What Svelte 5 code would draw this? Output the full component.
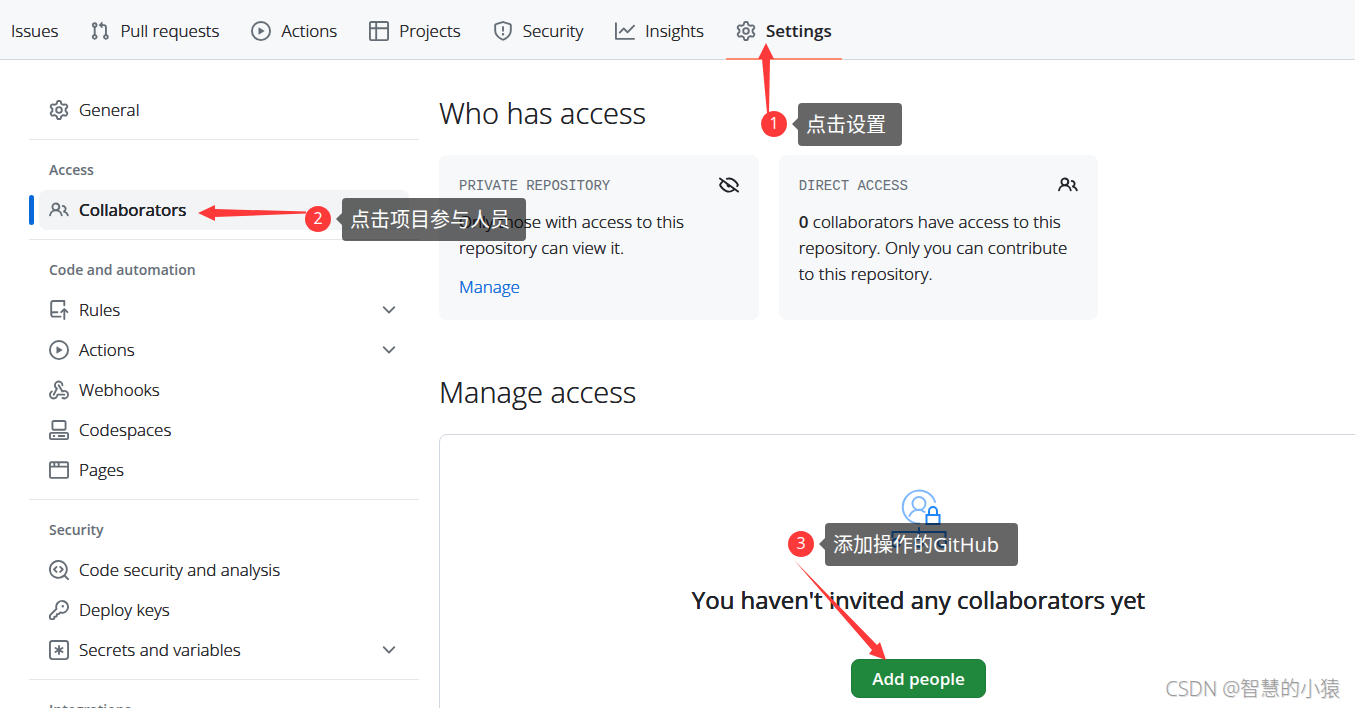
<script>
  const icons = {
    pull: 'M1.5 3.25a2.25 2.25 0 1 1 3 2.122v5.256a2.251 2.251 0 1 1-1.5 0V5.372A2.25 2.25 0 0 1 1.5 3.25Zm5.677-.177L9.573.677A.25.25 0 0 1 10 .854V2.5h1A2.5 2.5 0 0 1 13.5 5v5.628a2.251 2.251 0 1 1-1.5 0V5a1 1 0 0 0-1-1h-1v1.646a.25.25 0 0 1-.427.177L7.177 3.427a.25.25 0 0 1 0-.354ZM3.75 2.5a.75.75 0 1 0 0 1.5.75.75 0 0 0 0-1.5Zm0 9.5a.75.75 0 1 0 0 1.5.75.75 0 0 0 0-1.5Zm8.25.75a.75.75 0 1 0 1.5 0 .75.75 0 0 0-1.5 0Z',
    play: 'M8 0a8 8 0 1 1 0 16A8 8 0 0 1 8 0ZM1.5 8a6.5 6.5 0 1 0 13 0 6.5 6.5 0 0 0-13 0Zm4.879-2.773 4.264 2.559a.25.25 0 0 1 0 .428l-4.264 2.559A.25.25 0 0 1 6 10.559V5.442a.25.25 0 0 1 .379-.215Z',
    table: 'M0 1.75C0 .784.784 0 1.75 0h12.5C15.216 0 16 .784 16 1.75v12.5A1.75 1.75 0 0 1 14.25 16H1.75A1.75 1.75 0 0 1 0 14.25ZM6.5 6.5v8h7.75a.25.25 0 0 0 .25-.25V6.5Zm8-1.5V1.75a.25.25 0 0 0-.25-.25H6.5V5Zm-13 1.5v7.75c0 .138.112.25.25.25H5v-8ZM5 5V1.5H1.75a.25.25 0 0 0-.25.25V5Z',
    shield: 'M7.467.133a1.748 1.748 0 0 1 1.066 0l5.25 1.68A1.75 1.75 0 0 1 15 3.48V7c0 1.566-.32 3.182-1.303 4.682-.983 1.498-2.585 2.813-5.032 3.855a1.697 1.697 0 0 1-1.33 0c-2.447-1.042-4.049-2.357-5.032-3.855C1.32 10.182 1 8.566 1 7V3.48a1.75 1.75 0 0 1 1.217-1.667Zm.61 1.429a.25.25 0 0 0-.153 0l-5.25 1.68a.25.25 0 0 0-.174.238V7c0 1.358.275 2.666 1.057 3.86.784 1.194 2.121 2.34 4.366 3.297a.196.196 0 0 0 .154 0c2.245-.956 3.582-2.104 4.366-3.298C13.225 9.666 13.5 8.36 13.5 7V3.48a.251.251 0 0 0-.174-.237l-5.25-1.68ZM8.75 4.75v3a.75.75 0 0 1-1.5 0v-3a.75.75 0 0 1 1.5 0ZM9 10.5a1 1 0 1 1-2 0 1 1 0 0 1 2 0Z',
    graph: 'M1.5 1.75V13.5h13.75a.75.75 0 0 1 0 1.5H.75a.75.75 0 0 1-.75-.75V1.75a.75.75 0 0 1 1.5 0Zm14.28 2.53-5.25 5.25a.75.75 0 0 1-1.06 0L7 7.06 4.28 9.78a.751.751 0 0 1-1.042-.018.751.751 0 0 1-.018-1.042l3.25-3.25a.75.75 0 0 1 1.06 0L10 7.94l4.72-4.72a.751.751 0 0 1 1.042.018.751.751 0 0 1 .018 1.042Z',
    gear: 'M8 0a8.2 8.2 0 0 1 .701.031C9.444.095 9.99.645 10.16 1.29l.288 1.107c.018.066.079.158.212.224.231.114.454.243.668.386.123.082.233.09.299.071l1.103-.303c.644-.176 1.392.021 1.82.63.27.385.506.792.704 1.218.315.675.111 1.422-.364 1.891l-.814.806c-.049.048-.098.147-.088.294.016.257.016.515 0 .772-.01.147.038.246.088.294l.814.806c.475.469.679 1.216.364 1.891a7.977 7.977 0 0 1-.704 1.217c-.428.61-1.176.807-1.82.63l-1.102-.302c-.067-.019-.177-.011-.3.071a5.909 5.909 0 0 1-.668.386c-.133.066-.194.158-.211.224l-.29 1.106c-.168.646-.715 1.196-1.458 1.26a8.006 8.006 0 0 1-1.402 0c-.743-.064-1.289-.614-1.458-1.26l-.289-1.106c-.018-.066-.079-.158-.212-.224a5.738 5.738 0 0 1-.668-.386c-.123-.082-.233-.09-.299-.071l-1.103.303c-.644.176-1.392-.021-1.82-.63a8.12 8.12 0 0 1-.704-1.218c-.315-.675-.111-1.422.363-1.891l.815-.806c.05-.048.098-.147.088-.294a6.214 6.214 0 0 1 0-.772c.01-.147-.038-.246-.088-.294l-.815-.806C.635 6.045.431 5.298.746 4.623a7.92 7.92 0 0 1 .704-1.217c.428-.61 1.176-.807 1.82-.63l1.102.302c.067.019.177.011.3-.071.214-.143.437-.272.668-.386.133-.066.194-.158.211-.224l.29-1.106C6.009.645 6.556.095 7.299.03 7.53.01 7.764 0 8 0Zm-.571 1.525c-.036.003-.108.036-.137.146l-.289 1.105c-.147.561-.549.967-.998 1.189-.173.086-.34.183-.5.29-.417.278-.97.423-1.529.27l-1.103-.303c-.109-.03-.175.016-.195.045-.22.312-.412.644-.573.99-.014.031-.021.11.059.19l.815.806c.411.406.562.957.53 1.456a4.709 4.709 0 0 0 0 .582c.032.499-.119 1.05-.53 1.456l-.815.806c-.081.08-.073.159-.059.19.162.346.353.677.573.989.02.03.085.076.195.046l1.102-.303c.56-.153 1.113-.008 1.53.27.161.107.328.204.501.29.447.222.85.629.997 1.189l.289 1.105c.029.109.101.143.137.146a6.6 6.6 0 0 0 1.142 0c.036-.003.108-.036.137-.146l.289-1.105c.147-.561.549-.967.998-1.189.173-.086.34-.183.5-.29.417-.278.97-.423 1.529-.27l1.103.303c.109.029.175-.016.195-.045.22-.313.411-.644.573-.99.014-.031.021-.11-.059-.19l-.815-.806c-.411-.406-.562-.957-.53-1.456a4.709 4.709 0 0 0 0-.582c-.032-.499.119-1.05.53-1.456l.815-.806c.081-.08.073-.159.059-.19a6.464 6.464 0 0 0-.573-.989c-.02-.03-.085-.076-.195-.046l-1.102.303c-.56.153-1.113.008-1.53-.27a4.44 4.44 0 0 0-.501-.29c-.447-.222-.85-.629-.997-1.189l-.289-1.105c-.029-.11-.101-.143-.137-.146a6.6 6.6 0 0 0-1.142 0ZM11 8a3 3 0 1 1-6 0 3 3 0 0 1 6 0ZM9.5 8a1.5 1.5 0 1 0-3.001.001A1.5 1.5 0 0 0 9.5 8Z',
    people: 'M2 5.5a3.5 3.5 0 1 1 5.898 2.549 5.508 5.508 0 0 1 3.034 4.084.75.75 0 1 1-1.482.235 4 4 0 0 0-7.9 0 .75.75 0 0 1-1.482-.236A5.507 5.507 0 0 1 3.102 8.05 3.493 3.493 0 0 1 2 5.5ZM11 4a3.001 3.001 0 0 1 2.22 5.018 5.01 5.01 0 0 1 2.56 3.012.749.749 0 0 1-.885.954.752.752 0 0 1-.549-.514 3.507 3.507 0 0 0-2.522-2.372.75.75 0 0 1-.574-.73v-.352a.75.75 0 0 1 .416-.672A1.5 1.5 0 0 0 11 5.5.75.75 0 0 1 11 4Zm-5.5-.5a2 2 0 1 0-.001 3.999A2 2 0 0 0 5.5 3.5Z',
    push: 'M1 2.5A2.5 2.5 0 0 1 3.5 0h8.75a.75.75 0 0 1 .75.75v3.5a.75.75 0 0 1-1.5 0V1.5h-8a1 1 0 0 0-1 1v6.708A2.493 2.493 0 0 1 3.5 9h3.25a.75.75 0 0 1 0 1.5H3.5a1 1 0 0 0 0 2h5.75a.75.75 0 0 1 0 1.5H3.5A2.5 2.5 0 0 1 1 11.5Zm13.23 7.79h-.001l-1.224-1.224v6.184a.75.75 0 0 1-1.5 0V9.066L10.28 10.29a.75.75 0 0 1-1.06-1.061l2.505-2.504a.75.75 0 0 1 1.06 0L15.29 9.23a.751.751 0 0 1-.018 1.042.751.751 0 0 1-1.042.018Z',
    webhook: 'M5.5 4.25a2.25 2.25 0 0 1 4.5 0 .75.75 0 0 0 1.5 0 3.75 3.75 0 1 0-6.14 2.889l-2.272 4.258a.75.75 0 0 0 1.324.706L7 7.25a.75.75 0 0 0-.309-1.015A2.25 2.25 0 0 1 5.5 4.25ZM7.364 3.607a.75.75 0 0 1 1.03.257l2.608 4.349a3.75 3.75 0 1 1-.628 6.785.75.75 0 0 1 .752-1.299 2.25 2.25 0 1 0-.033-3.88.75.75 0 0 1-1.03-.256L7.107 4.636a.75.75 0 0 1 .257-1.03ZM2.9 8.776A.75.75 0 0 1 2.625 9.8 2.25 2.25 0 1 0 6 11.75a.75.75 0 0 1 .75-.751h5.5a.75.75 0 0 1 0 1.5H7.425a3.75 3.75 0 1 1-5.55-3.998.75.75 0 0 1 1.024.274Z',
    codespaces: 'M0 11.25c0-.966.784-1.75 1.75-1.75h12.5c.966 0 1.75.784 1.75 1.75v3A1.75 1.75 0 0 1 14.25 16H1.75A1.75 1.75 0 0 1 0 14.25Zm2-9.5C2 .784 2.784 0 3.75 0h8.5C13.216 0 14 .784 14 1.75v5a1.75 1.75 0 0 1-1.75 1.75h-8.5A1.75 1.75 0 0 1 2 6.75Zm1.75-.25a.25.25 0 0 0-.25.25v5c0 .138.112.25.25.25h8.5a.25.25 0 0 0 .25-.25v-5a.25.25 0 0 0-.25-.25Zm-2 9.5a.25.25 0 0 0-.25.25v3c0 .138.112.25.25.25h12.5a.25.25 0 0 0 .25-.25v-3a.25.25 0 0 0-.25-.25ZM7 12.75a.75.75 0 0 1 .75-.75h4.5a.75.75 0 0 1 0 1.5h-4.5a.75.75 0 0 1-.75-.75Zm-4 0a.75.75 0 0 1 .75-.75h.5a.75.75 0 0 1 0 1.5h-.5a.75.75 0 0 1-.75-.75Z',
    browser: 'M0 2.75C0 1.784.784 1 1.75 1h12.5c.966 0 1.75.784 1.75 1.75v10.5A1.75 1.75 0 0 1 14.25 15H1.75A1.75 1.75 0 0 1 0 13.25ZM14.5 6h-13v7.25c0 .138.112.25.25.25h12.5a.25.25 0 0 0 .25-.25Zm-6-3.5v2h6V2.75a.25.25 0 0 0-.25-.25ZM5 2.5v2h2v-2Zm-3.25 0a.25.25 0 0 0-.25.25V4.5h2v-2Z',
    codescan: 'M8.47 4.97a.75.75 0 0 0 0 1.06L9.94 7.5 8.47 8.97a.75.75 0 1 0 1.06 1.06l2-2a.75.75 0 0 0 0-1.06l-2-2a.75.75 0 0 0-1.06 0ZM6.53 6.03a.75.75 0 0 0-1.06-1.06l-2 2a.75.75 0 0 0 0 1.06l2 2a.75.75 0 1 0 1.06-1.06L5.06 7.5l1.47-1.47ZM12.246 13.307a7.501 7.501 0 1 1 1.06-1.06l2.474 2.473a.75.75 0 1 1-1.06 1.06l-2.474-2.473ZM1.5 7.5a6.002 6.002 0 0 0 3.608 5.504 6.002 6.002 0 0 0 6.486-1.117.748.748 0 0 1 .292-.293A6 6 0 1 0 1.5 7.5Z',
    key: 'M10.5 0a5.499 5.499 0 1 1-1.288 10.848l-.932.932a.749.749 0 0 1-.53.22H7v.75a.749.749 0 0 1-.22.53l-.5.5a.749.749 0 0 1-.53.22H5v.75a.749.749 0 0 1-.22.53l-.5.5a.749.749 0 0 1-.53.22h-2A1.75 1.75 0 0 1 0 14.25v-2c0-.199.079-.389.22-.53l4.932-4.932A5.5 5.5 0 0 1 10.5 0Zm-4 5.5c-.001.431.069.86.205 1.269a.75.75 0 0 1-.181.768L1.5 12.56v1.69c0 .138.112.25.25.25h1.69l.06-.06v-1.19a.75.75 0 0 1 .75-.75h1.19l.06-.06v-1.19a.75.75 0 0 1 .75-.75h1.19l1.023-1.025a.75.75 0 0 1 .768-.18A4 4 0 1 0 6.5 5.5ZM11 6a1 1 0 1 1 0-2 1 1 0 0 1 0 2Z',
    asterisk: 'M0 2.75A2.75 2.75 0 0 1 2.75 0h10.5A2.75 2.75 0 0 1 16 2.75v10.5A2.75 2.75 0 0 1 13.25 16H2.75A2.75 2.75 0 0 1 0 13.25ZM2.75 1.5c-.69 0-1.25.56-1.25 1.25v10.5c0 .69.56 1.25 1.25 1.25h10.5c.69 0 1.25-.56 1.25-1.25V2.75c0-.69-.56-1.25-1.25-1.25ZM8 4a.75.75 0 0 1 .75.75V6.7l1.69-.975a.75.75 0 0 1 .75 1.3L9.5 8l1.69.976a.75.75 0 0 1-.75 1.298L8.75 9.3v1.951a.75.75 0 0 1-1.5 0V9.299l-1.69.976a.75.75 0 0 1-.75-1.3L6.5 8l-1.69-.975a.75.75 0 0 1 .75-1.3l1.69.976V4.75A.75.75 0 0 1 8 4Z',
    chevron: 'M12.78 5.22a.749.749 0 0 1 0 1.06l-4.25 4.25a.749.749 0 0 1-1.06 0L3.22 6.28a.749.749 0 1 1 1.06-1.06L8 8.939l3.72-3.719a.749.749 0 0 1 1.06 0Z',
    eye: 'M.143 2.31a.75.75 0 0 1 1.047-.167l14.5 10.5a.75.75 0 1 1-.88 1.214l-2.248-1.628C11.346 13.19 9.792 14 8 14c-1.981 0-3.67-.992-4.933-2.078C1.797 10.832.88 9.577.43 8.9a1.619 1.619 0 0 1 0-1.797c.353-.533.995-1.42 1.868-2.305L.31 3.357A.75.75 0 0 1 .143 2.31Zm1.536 5.622A.12.12 0 0 0 1.657 8c0 .021.006.045.022.068.412.621 1.242 1.75 2.366 2.717C5.175 11.758 6.527 12.5 8 12.5c1.195 0 2.31-.488 3.29-1.191L9.063 9.695A2 2 0 0 1 6.058 7.52L3.529 5.688a14.207 14.207 0 0 0-1.85 2.244ZM8 3.5c-.516 0-1.017.09-1.499.251a.75.75 0 1 1-.473-1.423A6.207 6.207 0 0 1 8 2c1.981 0 3.67.992 4.933 2.078 1.27 1.091 2.187 2.345 2.637 3.023a1.62 1.62 0 0 1 0 1.798c-.11.166-.248.365-.41.587a.75.75 0 1 1-1.21-.887c.148-.201.272-.382.371-.53a.119.119 0 0 0 0-.137c-.412-.621-1.242-1.75-2.366-2.717C10.825 4.242 9.473 3.5 8 3.5Z'
  };

  const tabs = [
    { label: 'Issues' },
    { label: 'Pull requests', icon: 'pull' },
    { label: 'Actions', icon: 'play' },
    { label: 'Projects', icon: 'table' },
    { label: 'Security', icon: 'shield' },
    { label: 'Insights', icon: 'graph' },
    { label: 'Settings', icon: 'gear', current: true }
  ];

  const groups = [
    { items: [{ label: 'General', icon: 'gear' }] },
    { title: 'Access', items: [{ label: 'Collaborators', icon: 'people', current: true }] },
    {
      title: 'Code and automation',
      items: [
        { label: 'Rules', icon: 'push', expandable: true },
        { label: 'Actions', icon: 'play', expandable: true },
        { label: 'Webhooks', icon: 'webhook' },
        { label: 'Codespaces', icon: 'codespaces' },
        { label: 'Pages', icon: 'browser' }
      ]
    },
    {
      title: 'Security',
      items: [
        { label: 'Code security and analysis', icon: 'codescan' },
        { label: 'Deploy keys', icon: 'key' },
        { label: 'Secrets and variables', icon: 'asterisk', expandable: true }
      ]
    },
    { title: 'Integrations', items: [] }
  ];
</script>

{#snippet icon(name)}
  <svg class="icon" viewBox="0 0 16 16" width="20" height="20" aria-hidden="true"><path d={icons[name]} /></svg>
{/snippet}

<div class="page">
  <nav class="tabs">
    {#each tabs as tab}
      <a href="#top" class="tab" class:current={tab.current}>
        {#if tab.icon}{@render icon(tab.icon)}{/if}
        <span>{tab.label}</span>
      </a>
    {/each}
  </nav>

  <div class="columns">
    <aside class="sidebar">
      {#each groups as group}
        <section class="group">
          {#if group.title}<h3>{group.title}</h3>{/if}
          {#each group.items as item}
            {#if item.expandable}
              <button type="button" class="item">
                {@render icon(item.icon)}
                <span class="label">{item.label}</span>
                {@render icon('chevron')}
              </button>
            {:else}
              <a href="#top" class="item" class:current={item.current}>
                {@render icon(item.icon)}
                <span class="label">{item.label}</span>
              </a>
            {/if}
          {/each}
        </section>
      {/each}
    </aside>

    <main>
      <h2>Who has access</h2>
      <div class="cards">
        <article class="card">
          <header><span>PRIVATE REPOSITORY</span>{@render icon('eye')}</header>
          <p>Only those with access to this repository can view it.</p>
          <a href="#top">Manage</a>
        </article>
        <article class="card">
          <header><span>DIRECT ACCESS</span>{@render icon('people')}</header>
          <p><strong>0</strong> collaborators have access to this repository. Only you can contribute to this repository.</p>
        </article>
      </div>

      <h2>Manage access</h2>
      <div class="blank">
        <svg class="art" width="56" height="64" viewBox="0 0 56 64" fill="none" stroke-width="2" stroke-linecap="round" aria-hidden="true">
          <g stroke="#80b9fb">
            <path d="M44 13A16.500 16.500 0 1 0 28.500 34.500" />
            <circle cx="28" cy="14.500" r="6.500" />
            <path d="M18.500 27a9.500 9.500 0 0 1 15-4" />
          </g>
          <g stroke="#1f87fb">
            <rect x="35.500" y="26" width="13" height="9" />
            <path d="M38 25v-3a4 4 0 0 1 8 0v3" />
            <path d="M28 39v9M1.500 48v-5h53v5" />
            <circle cx="5" cy="54" r="4" />
            <circle cx="28" cy="54" r="4" />
            <circle cx="51" cy="54" r="4" />
          </g>
        </svg>
        <h3>You haven't invited any collaborators yet</h3>
        <button type="button" class="primary">Add people</button>
      </div>
    </main>
  </div>

  <!-- numbered walkthrough notes laid over the page -->
  <div class="notes">
    <svg class="arrows" width="900" height="708" viewBox="0 0 900 708" fill="#fd3939" aria-hidden="true">
      <path d="M766 43 774 59h-4L769 113h-2L762 59h-4Z" />
      <path d="M198 213 215 205v4L306 211.500v2L215 217v4Z" />
      <path d="M794 560 877 645 880 642 886 660 869 654 872 650Z" />
    </svg>
    <span class="pin one">1</span>
    <span class="note n-one">点击设置</span>
    <span class="pin two">2</span>
    <span class="note n-two">点击项目参与人员</span>
    <span class="pin three">3</span>
    <span class="note n-three">添加操作的GitHub</span>
    <span class="watermark">CSDN @智慧的小猿</span>
  </div>
</div>

<style>
  :global(body) {
    margin: 0;
    background: #fff;
  }
  .page {
    position: relative;
    height: 100vh;
    overflow: hidden;
    color: #1f2328;
    font-family: "Open Sans", "Noto Sans CJK SC", sans-serif;
    font-size: 17px;
    font-weight: 300;
    line-height: 26px;
    text-shadow: 0 0 0 currentColor;
  }
  h2,
  h3,
  p {
    margin: 0;
  }
  a,
  button {
    color: inherit;
    font: inherit;
    text-decoration: none;
    text-shadow: inherit;
  }
  .icon {
    flex: none;
    fill: #656d76;
  }
  .tabs {
    display: flex;
    gap: 12px;
    height: 59px;
    padding-left: 1px;
    border-bottom: 1px solid #d0d7de;
    background: #f6f8fa;
  }
  .tab {
    display: flex;
    align-items: center;
    gap: 10px;
    padding: 2px 10px 0;
    white-space: nowrap;
  }
  .tab.current {
    border-bottom: 2px solid #fd8c73;
    padding-top: 3px;
    box-sizing: border-box;
    height: 60px;
    font-weight: 600;
    text-shadow: none;
  }
  .columns {
    display: flex;
    gap: 20px;
    padding: 30px 0 0 29px;
  }
  .sidebar {
    flex: 0 0 390px;
  }
  .group + .group {
    margin-top: 9px;
    padding-top: 10px;
    border-top: 1px solid #e5e8eb;
  }
  .group h3 {
    padding: 0 20px;
    color: #656d76;
    font-size: 14px;
    font-weight: 600;
    line-height: 40px;
    text-shadow: none;
  }
  .item {
    display: flex;
    align-items: center;
    gap: 10px;
    box-sizing: border-box;
    width: 370px;
    height: 40px;
    margin: 0 10px;
    padding: 0 10px;
    border: 0;
    border-radius: 8px;
    background: none;
    text-align: left;
  }
  .item .label {
    flex: 1;
  }
  .item.current {
    position: relative;
    background: #f3f4f6;
    font-weight: 400;
    text-shadow: 0 0 0 currentColor, 0 0 0 currentColor;
  }
  .item.current::before {
    content: "";
    position: absolute;
    left: -10px;
    top: 5px;
    width: 5px;
    height: 30px;
    border-radius: 3px;
    background: #0969da;
  }
  main {
    flex: 1;
    margin-right: -43px;
  }
  h2 {
    padding-bottom: 19px;
    font-size: 29px;
    font-weight: 300;
    line-height: 46px;
  }
  .cards {
    display: flex;
    gap: 20px;
    margin-bottom: 49px;
  }
  .card {
    box-sizing: border-box;
    flex: 0 0 33.333%;
    min-height: 165px;
    padding: 20px;
    border-radius: 8px;
    background: #f6f8fa;
  }
  .card header {
    display: flex;
    justify-content: space-between;
    height: 20px;
    margin-bottom: 14px;
    color: #656d76;
    font-family: "Liberation Mono", monospace;
    font-size: 14px;
    line-height: 22px;
    text-shadow: none;
  }
  .card .icon {
    fill: #1f2328;
  }
  .card p {
    margin-bottom: 13px;
  }
  .card a {
    color: #0969da;
  }
  .card strong {
    font-weight: 600;
    text-shadow: none;
  }
  .blank {
    display: flex;
    flex-direction: column;
    align-items: center;
    padding: 54px 40px 40px;
    border: 1px solid #d0d7de;
    border-radius: 8px;
  }
  .blank h3 {
    margin: 28px 0 40px;
    font-size: 24px;
    font-weight: 400;
    line-height: 38px;
    text-shadow: 0 0 0 currentColor, 0 0 0 currentColor;
  }
  .primary {
    height: 39px;
    padding: 0 20px;
    border: 1px solid #1c7c39;
    border-radius: 8px;
    background: #1f883d;
    color: #fff;
    font-weight: 600;
    text-shadow: none;
  }
  .notes {
    position: absolute;
    inset: 0;
    pointer-events: none;
    font-weight: 400;
    text-shadow: none;
  }
  .arrows {
    position: absolute;
    left: 0;
    top: 0;
  }
  .pin {
    position: absolute;
    width: 26px;
    height: 26px;
    border-radius: 50%;
    background: #fd3939;
    color: #fff;
    font-size: 16px;
    line-height: 25px;
    text-align: center;
  }
  .note {
    position: absolute;
    box-sizing: border-box;
    height: 43px;
    padding: 0 8px;
    border-radius: 4px;
    background: rgba(0, 0, 0, 0.6);
    color: #fff;
    font-size: 20px;
    line-height: 44px;
    white-space: nowrap;
  }
  .note::before {
    content: "";
    position: absolute;
    right: 100%;
    top: 15px;
    border: 6px solid transparent;
    border-left: 0;
    border-right-color: rgba(0, 0, 0, 0.6);
  }
  .one {
    left: 761px;
    top: 111px;
  }
  .n-one {
    left: 798px;
    top: 103px;
    width: 104px;
  }
  .two {
    left: 305px;
    top: 206px;
  }
  .n-two {
    left: 342px;
    top: 198px;
    width: 184px;
  }
  .three {
    left: 788px;
    top: 531px;
  }
  .n-three {
    left: 825px;
    top: 523px;
    width: 193px;
  }
  .watermark {
    position: absolute;
    right: 15px;
    bottom: 6px;
    color: #999;
    font-size: 20px;
    font-weight: 300;
    text-shadow: 1px 1px 0 #ddd;
  }
</style>
